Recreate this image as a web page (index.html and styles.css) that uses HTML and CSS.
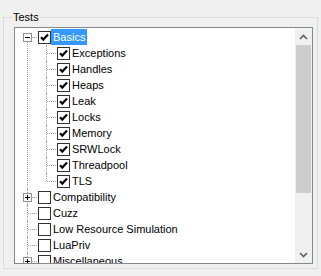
FILE: index.html
```html
<!DOCTYPE html>
<html>
<head>
<meta name="viewport" content="width=device-width, initial-scale=1">
<link rel="stylesheet" href="styles.css">
</head>
<body>

<fieldset class="group">
  <legend>Tests</legend>
  <div class="treebox">
    <div class="tree">
      <ul class="root">
        <li class="first">
          <div class="row"><span class="exp"><span class="box minus"></span></span><span class="cb on"><svg viewBox="0 0 11 11"><polyline points="2,5.2 4.3,7.6 9,2.6"/></svg></span><span class="label sel">Basics</span></div>
          <ul>
            <li><div class="row"><span class="exp"></span><span class="cb on"><svg viewBox="0 0 11 11"><polyline points="2,5.2 4.3,7.6 9,2.6"/></svg></span><span class="label">Exceptions</span></div></li>
            <li><div class="row"><span class="exp"></span><span class="cb on"><svg viewBox="0 0 11 11"><polyline points="2,5.2 4.3,7.6 9,2.6"/></svg></span><span class="label">Handles</span></div></li>
            <li><div class="row"><span class="exp"></span><span class="cb on"><svg viewBox="0 0 11 11"><polyline points="2,5.2 4.3,7.6 9,2.6"/></svg></span><span class="label">Heaps</span></div></li>
            <li><div class="row"><span class="exp"></span><span class="cb on"><svg viewBox="0 0 11 11"><polyline points="2,5.2 4.3,7.6 9,2.6"/></svg></span><span class="label">Leak</span></div></li>
            <li><div class="row"><span class="exp"></span><span class="cb on"><svg viewBox="0 0 11 11"><polyline points="2,5.2 4.3,7.6 9,2.6"/></svg></span><span class="label">Locks</span></div></li>
            <li><div class="row"><span class="exp"></span><span class="cb on"><svg viewBox="0 0 11 11"><polyline points="2,5.2 4.3,7.6 9,2.6"/></svg></span><span class="label">Memory</span></div></li>
            <li><div class="row"><span class="exp"></span><span class="cb on"><svg viewBox="0 0 11 11"><polyline points="2,5.2 4.3,7.6 9,2.6"/></svg></span><span class="label">SRWLock</span></div></li>
            <li><div class="row"><span class="exp"></span><span class="cb on"><svg viewBox="0 0 11 11"><polyline points="2,5.2 4.3,7.6 9,2.6"/></svg></span><span class="label">Threadpool</span></div></li>
            <li class="last"><div class="row"><span class="exp"></span><span class="cb on"><svg viewBox="0 0 11 11"><polyline points="2,5.2 4.3,7.6 9,2.6"/></svg></span><span class="label">TLS</span></div></li>
          </ul>
        </li>
        <li><div class="row"><span class="exp"><span class="box plus"></span></span><span class="cb"></span><span class="label">Compatibility</span></div></li>
        <li><div class="row"><span class="exp"></span><span class="cb"></span><span class="label">Cuzz</span></div></li>
        <li><div class="row"><span class="exp"></span><span class="cb"></span><span class="label">Low Resource Simulation</span></div></li>
        <li><div class="row"><span class="exp"></span><span class="cb"></span><span class="label">LuaPriv</span></div></li>
        <li><div class="row"><span class="exp"><span class="box plus"></span></span><span class="cb"></span><span class="label">Miscellaneous</span></div></li>
      </ul>
    </div>
    <div class="scroll">
      <div class="arrow"><svg width="9" height="6" viewBox="0 0 9 6"><polyline points="1,5 4.5,1.5 8,5"/></svg></div>
      <div class="track"><div class="thumb"></div></div>
      <div class="arrow"><svg width="9" height="6" viewBox="0 0 9 6"><polyline points="1,1 4.5,4.5 8,1"/></svg></div>
    </div>
  </div>
</fieldset>

</body>
</html>
```

FILE: styles.css
```css
body {
    margin: 0;
    background: #f0f0f0;
    font-family: "Liberation Sans", Arial, sans-serif;
    font-size: 11px;
    color: #000;
}

.group {
    margin: 11px 3px 0;
    padding: 3px 4px 4px 10px;
    border: 1px solid #dcdcdc;
}

.group legend {
    padding: 0 1px;
    margin-left: -2px;
    line-height: 13px;
}

.treebox {
    display: flex;
    height: 235px;
    border: 1px solid #828790;
    background: #fff;
}

.tree {
    flex: 1;
    overflow: hidden;
    padding-top: 1px;
}

.tree ul {
    list-style: none;
    margin: 0;
    padding: 0 0 0 19px;
}

.tree ul.root {
    padding-left: 3px;
}

.tree li {
    position: relative;
}

/* dotted connector lines */
.tree li::before {
    content: "";
    position: absolute;
    left: 9px;
    top: 0;
    bottom: 0;
    border-left: 1px dotted #a0a0a0;
}

.tree li.first::before {
    top: 8px;
}

.tree li.last::before {
    bottom: auto;
    height: 8px;
}

.tree li::after {
    content: "";
    position: absolute;
    left: 10px;
    top: 8px;
    width: 9px;
    border-top: 1px dotted #a0a0a0;
}

.row {
    display: flex;
    height: 16px;
}

.exp {
    flex: none;
    width: 19px;
    height: 16px;
}

.box {
    position: relative;
    z-index: 1;
    display: block;
    width: 7px;
    height: 7px;
    margin: 4px 0 0 5px;
    border: 1px solid #919191;
    background: #fff;
}

.box::before {
    content: "";
    position: absolute;
    left: 1px;
    top: 3px;
    width: 5px;
    height: 1px;
    background: #000;
}

.box.plus::after {
    content: "";
    position: absolute;
    left: 3px;
    top: 1px;
    width: 1px;
    height: 5px;
    background: #000;
}

.cb {
    position: relative;
    z-index: 1;
    flex: none;
    width: 11px;
    height: 11px;
    margin: 2px 0 0 1px;
    border: 1px solid #333;
    background: #fff;
}

.cb svg {
    display: block;
    width: 11px;
    height: 11px;
}

.cb polyline {
    fill: none;
    stroke: #000;
    stroke-width: 2.2;
}

.label {
    padding: 0 2px;
    line-height: 16px;
    white-space: nowrap;
}

.label.sel {
    background: #3399ff;
    color: #fff;
}

.scroll {
    flex: none;
    width: 17px;
    display: flex;
    flex-direction: column;
    background: #f0f0f0;
}

.arrow {
    height: 17px;
    display: flex;
    align-items: center;
    justify-content: center;
}

.arrow polyline {
    fill: none;
    stroke: #606060;
    stroke-width: 1.6;
}

.track {
    flex: 1;
}

.thumb {
    height: 148px;
    margin: 0 1px;
    background: #cdcdcd;
}
```
